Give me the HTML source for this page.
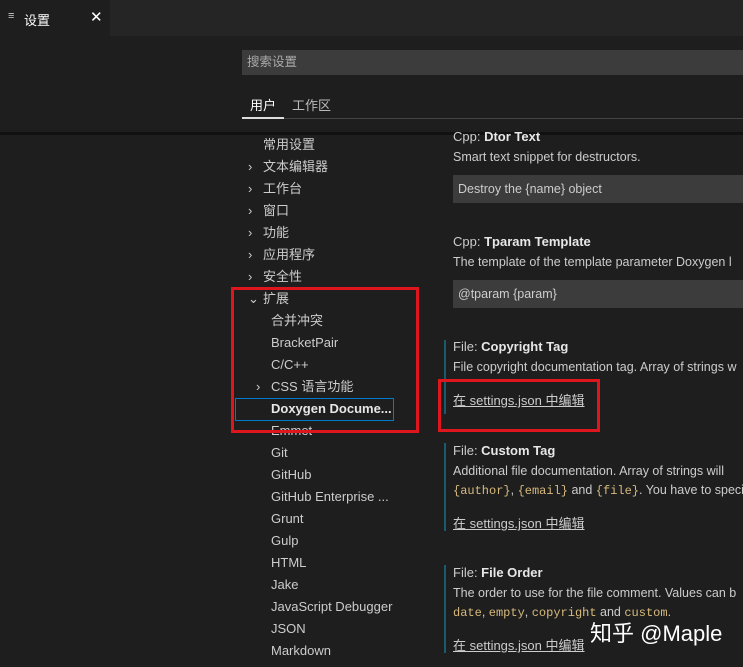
<!DOCTYPE html><html><head><meta charset="utf-8"><style>
body{margin:0;width:743px;height:667px;background:#1e1e1e;overflow:hidden;position:relative;font-family:"Liberation Sans","Noto Sans CJK SC",sans-serif;color:#ccc;font-size:13px}
.a{position:absolute;white-space:nowrap}
.nav{line-height:22px}
.nav div{position:relative}
.c{display:inline-block;width:15px}
.b{font-weight:bold;color:#e7e7e7}
.d{color:#ccc;font-size:12.5px}
.in{position:absolute;background:#3c3c3c;height:28px;line-height:28px;padding-left:5px;color:#ccc;font-size:12.5px}
.lnk{text-decoration:underline;color:#ccc;font-size:13px}
.m{font-family:"Liberation Mono",monospace;color:#d7ba7d;font-size:12px}
.bar{position:absolute;left:444px;width:2px;background:#1a5a6e}
.red{position:absolute;border:3px solid #e0161e}
</style></head><body>
<div class="a" style="left:0;top:0;width:743px;height:36px;background:#252526"></div>
<div class="a" style="left:0;top:0;width:110px;height:36px;background:#1e1e1e"></div>
<div class="a" style="left:8px;top:10px;color:#ccc;font-size:11px">≡</div>
<div class="a" style="left:24px;top:10px;color:#fff;font-size:13px">设置</div>
<div class="a" style="left:90px;top:8px;color:#fff;font-size:15px">✕</div>
<div class="in" style="left:242px;top:50px;width:496px;height:25px;line-height:25px;color:#aaa">搜索设置</div>
<div class="a" style="left:250px;top:95px;color:#fff">用户</div>
<div class="a" style="left:292px;top:95px;color:#bbb">工作区</div>
<div class="a" style="left:242px;top:117px;width:42px;height:2px;background:#ddd"></div>
<div class="a" style="left:284px;top:118px;width:459px;height:1px;background:#444"></div>
<div class="a" style="left:0;top:132px;width:743px;height:3px;background:#111"></div>
<div class="a nav" style="left:248px;top:134px">
<div style="padding-left:15px">常用设置</div>
<div><span class="c">›</span>文本编辑器</div><div><span class="c">›</span>工作台</div><div><span class="c">›</span>窗口</div><div><span class="c">›</span>功能</div><div><span class="c">›</span>应用程序</div><div><span class="c">›</span>安全性</div><div><span class="c">⌄</span>扩展</div>
<div style="padding-left:23px">合并冲突</div><div style="padding-left:23px">BracketPair</div><div style="padding-left:23px">C/C++</div>
<div style="padding-left:8px"><span class="c">›</span>CSS 语言功能</div>
<div style="padding-left:23px" class="b">Doxygen Docume...</div>
<div style="padding-left:23px">Emmet</div><div style="padding-left:23px">Git</div><div style="padding-left:23px">GitHub</div><div style="padding-left:23px">GitHub Enterprise ...</div><div style="padding-left:23px">Grunt</div><div style="padding-left:23px">Gulp</div><div style="padding-left:23px">HTML</div><div style="padding-left:23px">Jake</div><div style="padding-left:23px">JavaScript Debugger</div><div style="padding-left:23px">JSON</div><div style="padding-left:23px">Markdown</div>
</div>
<div class="a" style="left:235px;top:398px;width:157px;height:21px;border:1px solid #007acc"></div>
<div class="a" style="left:453px;top:129px"><span style="color:#ccc">Cpp:</span> <span class="b">Dtor Text</span></div>
<div class="a d" style="left:453px;top:150px">Smart text snippet for destructors.</div>
<div class="in" style="left:453px;top:175px;width:290px">Destroy the {name} object</div>
<div class="a" style="left:453px;top:234px">Cpp: <span class="b">Tparam Template</span></div>
<div class="a d" style="left:453px;top:255px">The template of the template parameter Doxygen l</div>
<div class="in" style="left:453px;top:280px;width:290px">@tparam {param}</div>
<div class="bar" style="top:340px;height:74px"></div>
<div class="a" style="left:453px;top:339px">File: <span class="b">Copyright Tag</span></div>
<div class="a d" style="left:453px;top:360px">File copyright documentation tag. Array of strings w</div>
<div class="a lnk" style="left:453px;top:390px">在 settings.json 中编辑</div>
<div class="bar" style="top:443px;height:88px"></div>
<div class="a" style="left:453px;top:443px">File: <span class="b">Custom Tag</span></div>
<div class="a d" style="left:453px;top:464px">Additional file documentation. Array of strings will</div>
<div class="a d" style="left:453px;top:483px"><span class="m">{author}</span>, <span class="m">{email}</span> and <span class="m">{file}</span>. You have to speci</div>
<div class="a lnk" style="left:453px;top:513px">在 settings.json 中编辑</div>
<div class="bar" style="top:565px;height:88px"></div>
<div class="a" style="left:453px;top:565px">File: <span class="b">File Order</span></div>
<div class="a d" style="left:453px;top:586px">The order to use for the file comment. Values can b</div>
<div class="a d" style="left:453px;top:605px"><span class="m">date</span>, <span class="m">empty</span>, <span class="m">copyright</span> and <span class="m">custom</span>.</div>
<div class="a lnk" style="left:453px;top:635px">在 settings.json 中编辑</div>
<div class="a" style="left:590px;top:616px;color:#fff;font-size:22px">知乎 @Maple</div>
<div class="red" style="left:231px;top:287px;width:182px;height:140px"></div>
<div class="red" style="left:438px;top:379px;width:156px;height:47px"></div>
</body></html>
